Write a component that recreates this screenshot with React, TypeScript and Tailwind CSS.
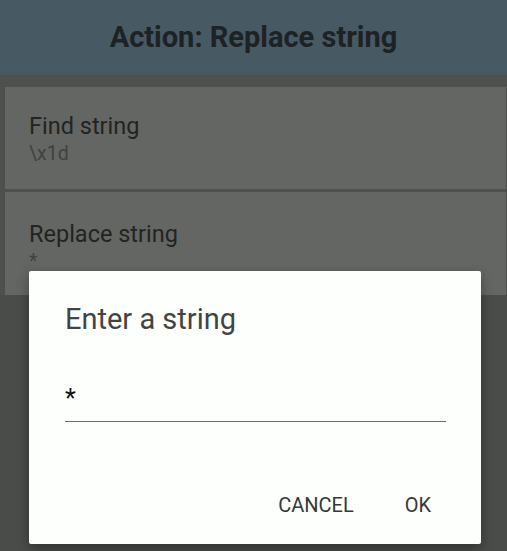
const App = () => {
  return (
    <div className="relative h-[551px] w-[507px] overflow-hidden bg-[#4a4c49] font-['Roboto',sans-serif]">
      {/* Barra do topo */}
      <div className="flex h-[75px] items-center justify-center bg-[#475963]">
        <h1 className="text-[29px] font-bold text-[#1d2224]">Action: Replace string</h1>
      </div>

      {/* Lista de campos */}
      <div className="bg-[#4e504d] pl-[5px] pr-px pt-[12px]">
        <div className="h-[102px] bg-[#646663] pl-6 pt-[24px]">
          <div className="text-[23.5px] leading-[30px] text-[#222422]">Find string</div>
          <div className="text-[19.5px] leading-[26px] text-[#404240]">\x1d</div>
        </div>
        <div className="h-[3px] bg-[#4e504d]" />
        <div className="h-[103px] bg-[#646663] pl-6 pt-[27px]">
          <div className="text-[23.5px] leading-[30px] text-[#222422]">Replace string</div>
          <div className="text-[19.5px] leading-[26px] text-[#404240]">*</div>
        </div>
      </div>

      {/* Diálogo */}
      <div className="absolute left-[29px] top-[271px] h-[273px] w-[452px] rounded-[2px] bg-[#fdfffd] shadow-[0_4px_12px_rgba(0,0,0,0.35)]">
        <div className="pl-9 pr-[35px] pt-[29px]">
          <div className="text-[29px] leading-[38px] text-[#424442]">Enter a string</div>
          <div className="mt-[46px] border-b-[1.5px] border-[#6b6d6b] pb-[7px] text-[25px] leading-[30px] text-[#111]">*</div>
        </div>
        <div className="mt-[68px] flex justify-end gap-[51px] pr-[50px] text-[20px] text-[#363836]">
          <span>CANCEL</span>
          <span>OK</span>
        </div>
      </div>
    </div>
  );
};

export default App;
